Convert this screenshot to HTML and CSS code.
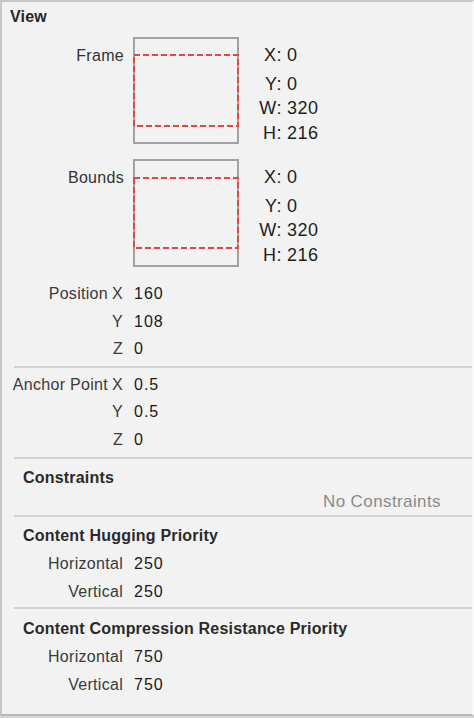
FILE: index.html
```html
<!DOCTYPE html>
<html>
<head>
<meta charset="utf-8">
<link rel="stylesheet" href="styles.css">
</head>
<body>
<div class="panel">
  <div class="head">View</div>

  <div class="rect-row">
    <div class="rect-label">Frame</div>
    <svg class="box" width="106" height="107" viewBox="0 0 106 107">
      <rect x="1" y="1" width="104" height="105" fill="none" stroke="#a2a2a2" stroke-width="2"/>
      <rect x="1" y="18" width="104" height="71" fill="none" stroke="#e5453c" stroke-width="2" stroke-dasharray="6 3"/>
    </svg>
    <div class="coords">
      <span class="ck">X:</span><span class="cv">0</span>
      <span class="ck">Y:</span><span class="cv">0</span>
      <span class="ck">W:</span><span class="cv">320</span>
      <span class="ck">H:</span><span class="cv">216</span>
    </div>
  </div>

  <div class="rect-row second">
    <div class="rect-label">Bounds</div>
    <svg class="box" width="106" height="108" viewBox="0 0 106 108">
      <rect x="1" y="1" width="104" height="106" fill="none" stroke="#a2a2a2" stroke-width="2"/>
      <rect x="1" y="19" width="104" height="70" fill="none" stroke="#e5453c" stroke-width="2" stroke-dasharray="6 3"/>
    </svg>
    <div class="coords">
      <span class="ck">X:</span><span class="cv">0</span>
      <span class="ck">Y:</span><span class="cv">0</span>
      <span class="ck">W:</span><span class="cv">320</span>
      <span class="ck">H:</span><span class="cv">216</span>
    </div>
  </div>

  <div class="group position">
    <span class="lbl">Position</span><span class="axis">X</span><span class="val">160</span>
    <span class="lbl"></span><span class="axis">Y</span><span class="val">108</span>
    <span class="lbl"></span><span class="axis">Z</span><span class="val">0</span>
  </div>
  <div class="sep"></div>

  <div class="group anchor">
    <span class="lbl">Anchor Point</span><span class="axis">X</span><span class="val">0.5</span>
    <span class="lbl"></span><span class="axis">Y</span><span class="val">0.5</span>
    <span class="lbl"></span><span class="axis">Z</span><span class="val">0</span>
  </div>
  <div class="sep"></div>

  <div class="section constraints">
    <div class="title">Constraints</div>
    <div class="empty">No Constraints</div>
  </div>
  <div class="sep"></div>

  <div class="section hugging">
    <div class="title">Content Hugging Priority</div>
    <div class="group prio">
      <span class="wide">Horizontal</span><span class="val">250</span>
      <span class="wide">Vertical</span><span class="val">250</span>
    </div>
  </div>
  <div class="sep"></div>

  <div class="section compression">
    <div class="title">Content Compression Resistance Priority</div>
    <div class="group prio">
      <span class="wide">Horizontal</span><span class="val">750</span>
      <span class="wide">Vertical</span><span class="val">750</span>
    </div>
  </div>
</div>
</body>
</html>
```

FILE: styles.css
```css
html, body {
  margin: 0;
  padding: 0;
}
body {
  background: #d4d4d4;
  width: 474px;
  height: 718px;
  overflow: hidden;
  font-family: "Liberation Sans", Arial, sans-serif;
  font-size: 16px;
  letter-spacing: 0.3px;
  color: #333;
}
.panel {
  box-sizing: border-box;
  height: 716px;
  background: #f2f2f2;
  border-top: 2px solid #c6c6c6;
  border-left: 2px solid #c8c8c8;
  border-right: 2px solid #f8f8f8;
  border-bottom: 2px solid #b9b9b9;
  display: flex;
  flex-direction: column;
}
.head {
  font-weight: bold;
  color: #262626;
  font-size: 16px;
  letter-spacing: 0.2px;
  line-height: 20px;
  padding: 5px 0 0 8px;
  height: 25px;
  box-sizing: border-box;
}
.rect-row {
  display: grid;
  grid-template-columns: 122px 106px 149px;
  column-gap: 9px;
  margin-top: 10px;
  align-items: start;
}
.rect-row.second {
  margin-top: 14px;
}
.rect-label {
  text-align: right;
  line-height: 24px;
  margin-top: 7px;
  color: #333;
}
.box {
  display: block;
}
.coords {
  display: grid;
  grid-template-columns: 30px auto;
  grid-template-rows: 28.5px 24.5px 24.5px 24.5px;
  column-gap: 5px;
  font-size: 18px;
  letter-spacing: 0.5px;
  line-height: 24.5px;
  margin-top: 6px;
  margin-left: 4px;
  color: #1e1e1e;
}
.coords .ck {
  text-align: right;
  white-space: nowrap;
}
.group {
  display: grid;
  grid-template-columns: 106px 15px auto;
  column-gap: 0;
  grid-auto-rows: 27.5px;
  line-height: 27.5px;
}
.lbl, .axis, .wide {
  text-align: right;
  color: #3a3a3a;
  white-space: nowrap;
}
.val {
  color: #1a1a1a;
  padding-left: 11px;
  letter-spacing: 1px;
}
.position {
  padding-top: 13px;
  padding-bottom: 3px;
}
.anchor {
  padding-top: 3px;
  padding-bottom: 4px;
}
.sep {
  height: 2px;
  background: #d2d2d2;
  margin-left: 12px;
  flex: none;
}
.section {
  padding-left: 21px;
}
.title {
  font-weight: bold;
  color: #2a2a2a;
  line-height: 22px;
  font-size: 16px;
  letter-spacing: 0.2px;
}
.constraints {
  padding-top: 8px;
  padding-bottom: 2px;
  padding-right: 31px;
}
.empty {
  text-align: right;
  color: #8a8a8a;
  font-size: 17px;
  letter-spacing: 0.4px;
  line-height: 22px;
  margin-top: 2px;
}
.hugging {
  padding-top: 8px;
  padding-bottom: 2px;
}
.compression {
  padding-top: 9px;
}
.prio {
  margin-left: -21px;
  margin-top: 3px;
}
.prio .wide {
  grid-column: 1 / span 2;
}
```
